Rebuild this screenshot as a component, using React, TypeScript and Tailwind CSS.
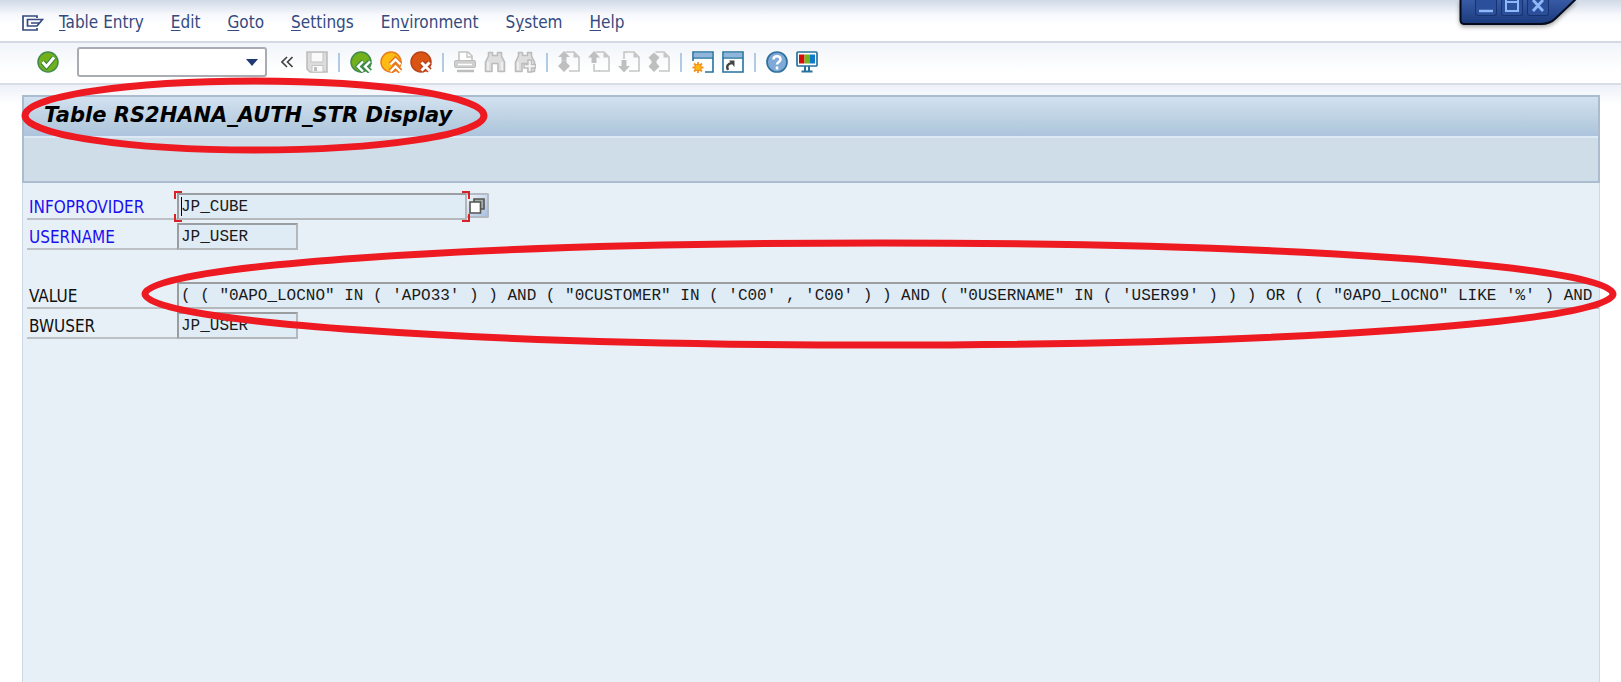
import React from 'react';

type MenuEntry = { before?: string; key: string; after: string };

const menu: MenuEntry[] = [
    { key: 'T', after: 'able Entry' },
    { key: 'E', after: 'dit' },
    { key: 'G', after: 'oto' },
    { key: 'S', after: 'ettings' },
    { before: 'En', key: 'v', after: 'ironment' },
    { before: 'S', key: 'y', after: 'stem' },
    { key: 'H', after: 'elp' },
];

const filterValue =
    `( ( "0APO_LOCNO" IN ( 'APO33' ) ) AND ( "0CUSTOMER" IN ( 'C00' , 'C00' ) ) AND ` +
    `( "0USERNAME" IN ( 'USER99' ) ) ) OR ( ( "0APO_LOCNO" LIKE '%' ) AND ( "`;

function Icon({ children }: { children: React.ReactNode }) {
    return (
        <svg viewBox="0 0 22 22" className="block h-[22px] w-[22px]" fill="none" aria-hidden="true">
            {children}
        </svg>
    );
}

function ToolButton({ label, disabled, children }: { label: string; disabled?: boolean; children: React.ReactNode }) {
    return (
        <button type="button" aria-label={label} title={label} disabled={disabled} className="shrink-0">
            <Icon>{children}</Icon>
        </button>
    );
}

function Separator() {
    return <div className="mx-[2px] h-[19px] w-[2px] shrink-0 bg-[#b3cbe2]" />;
}

const PageShape = () => (
    <>
        <path d="M7.500 1H16l5 5v14H11" stroke="#c6c6c6" strokeWidth="1.600" />
        <path d="M15.500 1v5.500H21z" fill="#c6c6c6" />
    </>
);

const Binoculars = () => (
    <g>
        <path
            d="M4.500 1.500h4v3h5v-3h4v3.500l3 6v9.500h-6.500v-8h-6v8H1.500V11l3-6z"
            fill="#dedede"
            stroke="#bcbcbc"
            strokeWidth="1.600"
            strokeLinejoin="round"
        />
        <path d="M4 11v8M18 11v8" stroke="#fafafa" strokeWidth="1.200" />
    </g>
);

// oval outline that keeps an even stroke whatever the width
function Ring({ className }: { className: string }) {
    return (
        <svg
            viewBox="0 0 100 100"
            preserveAspectRatio="none"
            className={`pointer-events-none absolute overflow-visible ${className}`}
            fill="none"
            aria-hidden="true"
        >
            <ellipse cx="50" cy="50" rx="50" ry="50" stroke="#ee1a22" strokeWidth="7" vectorEffect="non-scaling-stroke" />
        </svg>
    );
}

function Toolbar() {
    return (
        <div className="flex h-[42px] items-center gap-2 border-b-2 border-[#d9dee6] bg-linear-to-b from-[#f1f4f9] to-white to-70% pb-[2px] pl-[37px]">
            <ToolButton label="Enter">
                <circle cx="11" cy="11" r="10" fill="#72b01c" stroke="#3f8a4c" strokeWidth="1.500" />
                <path d="M5.500 11l4 4.500 7.500-9" stroke="#2f7d32" strokeWidth="5" />
                <path d="M5.500 11l4 4.500 7.500-9" stroke="#fff" strokeWidth="3" />
            </ToolButton>
            <div className="relative ml-[10px] mr-[6px]">
                <select
                    aria-label="Command"
                    className="block h-[30px] w-[190px] appearance-none rounded-[3px] border-2 border-[#a9adb3] bg-white px-2 text-base"
                >
                    <option value=""></option>
                </select>
                <svg viewBox="0 0 12 7" className="pointer-events-none absolute right-[9px] top-3 h-[7px] w-3">
                    <path d="M0 0h12L6 7z" fill="#213a73" />
                </svg>
            </div>
            <button type="button" aria-label="Hide command field" className="mr-[5px]">
                <svg viewBox="0 0 12 12" className="block h-3 w-3" fill="none" stroke="#444" strokeWidth="1.600">
                    <path d="M6 1L1 6l5 5M11.500 1l-5 5 5 5" />
                </svg>
            </button>
            <ToolButton label="Save" disabled>
                <path d="M1 1h20v20H4l-3-3z" fill="#dcdcdc" stroke="#bdbdbd" strokeWidth="1.600" />
                <path d="M5 1.500h12V11H5z" fill="#fafafa" stroke="#c4c4c4" />
                <path d="M6 14.500h11V21H6z" fill="#fafafa" stroke="#c4c4c4" />
                <path d="M8 16h3v4H8z" fill="#bdbdbd" />
            </ToolButton>
            <Separator />
            <ToolButton label="Back">
                <circle cx="11" cy="11" r="10" fill="#72b01c" stroke="#3f8a4c" strokeWidth="1.500" />
                <path d="M13.500 10.500L8.500 15.500l5 5M20 10.500l-5 5 5 5" stroke="#3f8a4c" strokeWidth="5.500" />
                <path d="M13 10.500L8 15.500l5 5M20 10.500l-5 5 5 5" stroke="#fff" strokeWidth="2.400" />
            </ToolButton>
            <ToolButton label="Exit">
                <circle cx="11" cy="11" r="10" fill="#fdbb13" stroke="#ea7a1c" strokeWidth="1.500" />
                <path d="M10.500 13.500l5-5 5 5M10.500 20.500l5-5 5 5" stroke="#ea7a1c" strokeWidth="5.500" />
                <path d="M10.500 13.500l5-5 5 5M10.500 20.500l5-5 5 5" stroke="#fff" strokeWidth="2.400" />
            </ToolButton>
            <ToolButton label="Cancel">
                <circle cx="11" cy="11" r="10" fill="#da5513" stroke="#b8421a" strokeWidth="1.500" />
                <path d="M11.500 11.500l8 8M19.500 11.500l-8 8" stroke="#b8421a" strokeWidth="6" />
                <path d="M11.500 11.500l8 8M19.500 11.500l-8 8" stroke="#fff" strokeWidth="3" />
            </ToolButton>
            <Separator />
            <ToolButton label="Print" disabled>
                <path d="M5 10V1h9l4 4v5" fill="#fff" stroke="#c4c4c4" strokeWidth="1.600" />
                <path d="M13 1v5h5" stroke="#c4c4c4" strokeWidth="1.400" />
                <rect x="0.500" y="9.500" width="21" height="7" rx="1.500" fill="#cfcfcf" stroke="#bdbdbd" />
                <path d="M4 13.500h14" stroke="#fff" strokeWidth="1.500" />
                <path d="M3 20h17" stroke="#bdbdbd" strokeWidth="2.500" />
            </ToolButton>
            <ToolButton label="Find" disabled>
                <Binoculars />
            </ToolButton>
            <ToolButton label="Find next" disabled>
                <Binoculars />
                <path
                    d="M14 9h3.500v4.500h4V17h-4v4H14v-4h-4v-3.500h4z"
                    fill="#f4f4f4"
                    stroke="#bcbcbc"
                    strokeWidth="1.400"
                />
            </ToolButton>
            <Separator />
            <ToolButton label="First page" disabled>
                <PageShape />
                <path d="M6 0l6 6H8.500v3.500h-5V6H0z" fill="#bfbfbf" />
                <path d="M3.500 9.500h5v2L12 15l-6 6-6-6 3.500-3.500z" fill="#bfbfbf" />
            </ToolButton>
            <ToolButton label="Previous page" disabled>
                <PageShape />
                <path d="M6 13v7h6" stroke="#c6c6c6" strokeWidth="1.600" />
                <path d="M6 0l6 6.500H8.500V12h-5V6.500H0z" fill="#bfbfbf" />
            </ToolButton>
            <ToolButton label="Next page" disabled>
                <PageShape />
                <path d="M6 8V1h3" stroke="#c6c6c6" strokeWidth="1.600" />
                <path d="M6 21.500L0 15h3.500V9h5v6H12z" fill="#bfbfbf" />
            </ToolButton>
            <ToolButton label="Last page" disabled>
                <PageShape />
                <path d="M6 1.500l5.500 5L8.500 10h-5l-3-3.500z" fill="#bfbfbf" />
                <path d="M3.500 10h5v2l3 3.500L6 21l-5.500-5.500 3-3.500z" fill="#bfbfbf" />
            </ToolButton>
            <Separator />
            <ToolButton label="New session">
                <path d="M1 10V1h20v20h-8" fill="#fff" stroke="#25729f" strokeWidth="1.600" />
                <path d="M2 2h18v4H2z" fill="#8fb5dc" />
                <path d="M1 7h20" stroke="#25729f" strokeWidth="1.500" />
                <path d="M6 11v11M0.500 16.500h11M2 12.500l8 8M10 12.500l-8 8" stroke="#f5941d" strokeWidth="1.800" />
                <circle cx="6" cy="16.500" r="3.300" fill="#fdb913" stroke="#f08a1d" />
            </ToolButton>
            <ToolButton label="Create shortcut">
                <path d="M1 1h20v20H1z" fill="#fff" stroke="#25729f" strokeWidth="1.600" />
                <path d="M2 2h18v4H2z" fill="#8fb5dc" />
                <path d="M1 7h20" stroke="#25729f" strokeWidth="1.500" />
                <path d="M6 19c-2-4 0-6.500 4-7" stroke="#444" strokeWidth="2.400" />
                <path d="M7 9.500h5.500V16z" fill="#444" />
            </ToolButton>
            <Separator />
            <ToolButton label="Help">
                <circle cx="11" cy="11" r="10" fill="#7fa9d6" stroke="#2d729c" strokeWidth="1.700" />
                <path d="M7.500 8.500c0-4.500 7-4.500 7 0 0 2.500-3.500 2.500-3.500 5M11 15.500v3" stroke="#fff" strokeWidth="2.500" />
            </ToolButton>
            <ToolButton label="Customize local layout">
                <rect x="1" y="1" width="20" height="14" rx="1" fill="#fff" stroke="#25729f" strokeWidth="1.700" />
                <path d="M3 3.500h5.500v9H3z" fill="#d50a0a" />
                <path d="M8.500 3.500H14v9H8.500z" fill="#74b51c" />
                <path d="M14 3.500h5v9h-5z" fill="#0f7ac8" />
                <path d="M9 15v5M13 15v5M5.500 20.500h11" stroke="#25729f" strokeWidth="2" />
            </ToolButton>
        </div>
    );
}

function WindowControls() {
    return (
        <div className="absolute right-[30px] top-0 h-8 w-[132px]">
            <svg viewBox="0 0 132 32" className="absolute inset-0 h-8 w-[132px] drop-shadow-[0_2px_2px_rgba(0,0,0,0.35)]" aria-hidden="true">
                <defs>
                    <linearGradient id="caption" x1="0" y1="0" x2="0" y2="1">
                        <stop offset="0" stopColor="#3a5da8" />
                        <stop offset="1" stopColor="#1b3a7d" />
                    </linearGradient>
                </defs>
                <path
                    d="M1.500 -2V20q0 4 4 4H82q9 0 15-6L118 -2z"
                    fill="url(#caption)"
                    stroke="#050b1c"
                    strokeWidth="2"
                />
            </svg>
            <div className="relative flex gap-1 pl-4 text-[#8fb8f8]">
                <button type="button" aria-label="Minimize" className="h-4 w-[22px] rounded-b-[3px] border border-t-0 border-[#17336f] bg-[#2c4f9b]">
                    <svg viewBox="0 0 20 15" className="block h-[15px] w-5"><path d="M3 11h14" stroke="currentColor" strokeWidth="2.500" /></svg>
                </button>
                <button type="button" aria-label="Maximize" className="h-4 w-[22px] rounded-b-[3px] border border-t-0 border-[#17336f] bg-[#2c4f9b]">
                    <svg viewBox="0 0 20 15" className="block h-[15px] w-5" fill="none"><path d="M4 0v11h12V0M4 2h12" stroke="currentColor" strokeWidth="2" /></svg>
                </button>
                <button type="button" aria-label="Close" className="h-4 w-[22px] rounded-b-[3px] border border-t-0 border-[#17336f] bg-[#2c4f9b]">
                    <svg viewBox="0 0 20 15" className="block h-[15px] w-5"><path d="M5 0l10 11M15 0L5 11" stroke="currentColor" strokeWidth="2.800" /></svg>
                </button>
            </div>
        </div>
    );
}

type FieldProps = { id: string; label: string; value: string; keyField?: boolean; wide?: boolean };

function FieldRow({ id, label, value, keyField, wide }: FieldProps) {
    return (
        <div className="flex h-[27px]">
            <label
                htmlFor={id}
                className={`w-[150px] shrink-0 border-b-2 border-[#bdc1c5] pl-[2px] text-[17px] leading-7 ${keyField ? 'text-[#1c10f0]' : 'text-[#111]'}`}
            >
                {label}
            </label>
            <input
                id={id}
                readOnly
                defaultValue={value}
                className={`border-2 border-[#b4b8bb] border-t-[#9a9ea1] border-l-[#9a9ea1] bg-[#dfebf5] pl-[2px] font-['Liberation_Mono',monospace] text-base text-[#1a1a1a] outline-none ${wide ? 'min-w-0 flex-1 border-r-0' : 'w-[121px]'}`}
            />
        </div>
    );
}

export default function App() {
    return (
        <div className="relative flex min-h-screen flex-col overflow-hidden bg-white font-['DejaVu_Sans_Condensed','DejaVu_Sans',sans-serif]">
            <nav className="flex h-[43px] items-center gap-[27px] border-b-2 border-[#d3d9e3] bg-linear-to-b from-[#d0d9e6] via-[#f6f8fc] via-35% to-white to-60% pl-[22px] pt-1 text-[17px] text-[#344a80]">
                <button type="button" aria-label="System menu" className="-mr-3">
                    <svg viewBox="0 0 22 16" className="block h-4 w-[22px]" fill="none" stroke="#344a80" strokeWidth="1.700">
                        <path d="M15 3V1H1v14h14v-2" />
                        <path d="M20.500 4.500H5.500v6.500H15zM9 8h8" />
                    </svg>
                </button>
                {menu.map((m) => (
                    <a key={m.key} href="#" className="whitespace-nowrap">
                        {m.before}
                        <span className="underline underline-offset-2">{m.key}</span>
                        {m.after}
                    </a>
                ))}
            </nav>
            <Toolbar />
            <main className="flex flex-1 flex-col bg-linear-to-b from-[#edf1f8] to-white to-[20px] pl-[22px] pr-[21px] pt-[10px]">
                <header className="border-2 border-[#abbccf] bg-[#cfdde8]">
                    <div className="flex h-[41px] items-center border-b-2 border-[#dde9f5] bg-linear-to-b from-[#d2e1f0] via-[#b7cddf] via-70% to-[#adc4de] pb-1 pl-5">
                        <h1 className="whitespace-nowrap font-['DejaVu_Sans',sans-serif] text-[21px] font-bold italic leading-6 text-black">
                            Table RS2HANA_AUTH_STR Display
                        </h1>
                    </div>
                    <div className="h-[43px]" />
                </header>
                <section className="flex flex-1 flex-col gap-8 border-x border-[#cdd9e6] bg-[#e8f0f7] pl-1 pt-[10px]">
                    <div className="flex flex-col gap-[3px]">
                        <div className="flex h-[27px]">
                            <label
                                htmlFor="infoprovider"
                                className="w-[150px] shrink-0 border-b-2 border-[#bdc1c5] pl-[2px] text-[17px] leading-7 text-[#1c10f0]"
                            >
                                INFOPROVIDER
                            </label>
                            <div className="relative flex">
                                <input
                                    id="infoprovider"
                                    defaultValue="JP_CUBE"
                                    className="w-[290px] border-2 border-[#b4b8bb] border-l-[#9a9ea1] border-t-[#9a9ea1] bg-[#dfebf5] pl-[2px] font-['Liberation_Mono',monospace] text-base text-[#1a1a1a] outline-none"
                                />
                                {/* text cursor and focus brackets */}
                                <span className="absolute left-1 top-1 h-[19px] w-px bg-black" />
                                <span className="absolute -left-[3px] -top-[2px] h-2 w-2 border-l-2 border-t-2 border-[#dc2028]" />
                                <span className="absolute -bottom-[2px] -left-[3px] h-2 w-2 border-b-2 border-l-2 border-[#dc2028]" />
                                <span className="absolute -top-[2px] left-[285px] h-2 w-2 border-r-2 border-t-2 border-[#dc2028]" />
                                <span className="absolute -bottom-[2px] left-[285px] h-2 w-2 border-b-2 border-r-2 border-[#dc2028]" />
                            </div>
                            <button
                                type="button"
                                aria-label="Value help"
                                className="flex h-[25px] w-[22px] items-center justify-center rounded-r-[2px] border-2 border-l-0 border-[#b3bac4] bg-linear-to-br from-[#f2f6fb] to-[#a9c0e2]"
                            >
                                <svg viewBox="0 0 16 16" className="block h-4 w-4" stroke="#54544c" strokeWidth="1.600">
                                    <path d="M5 1h10v10H5z" fill="#a3aeb0" />
                                    <path d="M1 4h10.500v11H1z" fill="#fff" />
                                </svg>
                            </button>
                        </div>
                        <FieldRow id="username" label="USERNAME" value="JP_USER" keyField />
                    </div>
                    <div className="flex flex-col gap-[3px]">
                        <FieldRow id="value" label="VALUE" value={filterValue} wide />
                        <FieldRow id="bwuser" label="BWUSER" value="JP_USER" />
                    </div>
                </section>
            </main>
            <WindowControls />
            <Ring className="left-[25px] top-[81px] h-[69px] w-[459px]" />
            <Ring className="left-[145px] top-[243px] h-[102px] w-[calc(100%-153px)]" />
        </div>
    );
}
